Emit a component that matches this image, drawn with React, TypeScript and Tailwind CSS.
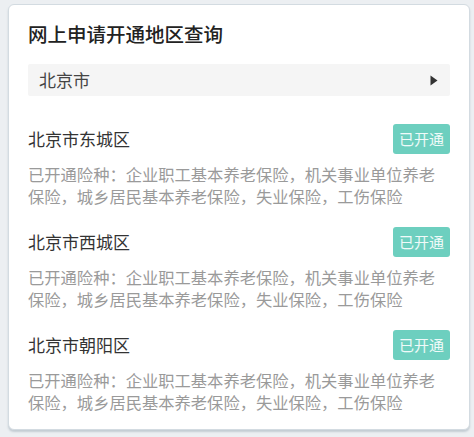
const items = ['北京市东城区', '北京市西城区', '北京市朝阳区'];

const fontStack = { fontFamily: '"Noto Sans CJK SC", "Noto Sans", sans-serif' };

export default function App() {
  return (
    <div className="w-[474px] h-[437px] bg-[#eceff2] pt-[4px] pl-[8px]" style={fontStack}>
      <div className="w-[462px] h-[426px] bg-white rounded-[6px] border border-[#d3dbe1] shadow-[0_2px_2px_rgba(120,140,155,0.35)] px-[19px] pt-[15px]">
        <h1 className="text-[19.5px] leading-[28px] font-medium text-[#222]">网上申请开通地区查询</h1>

        <div className="mt-[16px] h-[32px] bg-[#f5f5f5] rounded-[2px] flex items-center justify-between pl-[11px] pr-[12px]">
          <span className="text-[17px] text-[#444]">北京市</span>
          <svg width="8" height="11" viewBox="0 0 8 11">
            <path d="M0.5 0.5 L7.5 5.5 L0.5 10.5 Z" fill="#333" />
          </svg>
        </div>

        <div className="mt-[28px] flex flex-col gap-[20px]">
          {items.map((name) => (
            <div key={name}>
              <div className="h-[30px] flex items-center justify-between">
                <span className="text-[17px] text-[#333]">{name}</span>
                <span className="w-[57px] h-[30px] rounded-[3px] bg-[#6dcfbf] text-[15px] text-white/90 flex items-center justify-center">
                  已开通
                </span>
              </div>
              <p className="mt-[9px] w-[418px] text-[16.3px] leading-[22px] text-[#9a9a9a]">
                已开通险种：企业职工基本养老保险，机关事业单位养老保险，城乡居民基本养老保险，失业保险，工伤保险
              </p>
            </div>
          ))}
        </div>
      </div>
    </div>
  );
}
